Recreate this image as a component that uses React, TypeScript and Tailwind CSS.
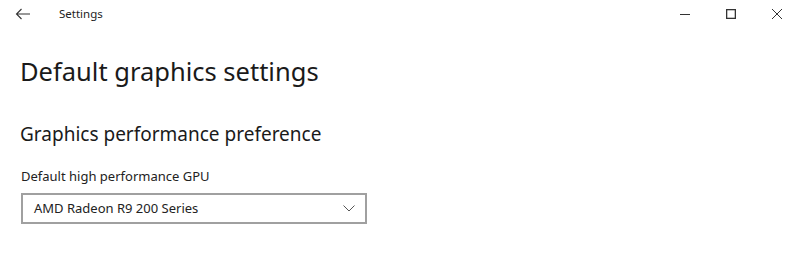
import React from "react";

export default function App() {
  return (
    <div className="w-[800px] h-[259px] bg-white overflow-hidden text-[#1a1a1a]" style={{ fontFamily: '"Noto Sans", "Open Sans", sans-serif' }}>
      <div className="h-[27px] flex items-center">
        <div className="w-[44px] flex justify-center pl-[2px]">
          <svg width="16" height="12" viewBox="0 0 16 12" fill="none" stroke="#333" strokeWidth="1.1">
            <path d="M15 6H1.5M6.5 1L1.5 6l5 5" />
          </svg>
        </div>
        <span className="ml-[15px] text-[11.5px] leading-none text-[#222]">Settings</span>
        <div className="ml-auto flex items-center h-full">
          <div className="w-[46px] flex justify-center">
            <svg width="10" height="10" viewBox="0 0 10 10" stroke="#333" strokeWidth="1">
              <path d="M0 5.5H10" />
            </svg>
          </div>
          <div className="w-[46px] flex justify-center">
            <svg width="10" height="10" viewBox="0 0 10 10" fill="none" stroke="#333" strokeWidth="1.3">
              <rect x="0.65" y="0.65" width="8.7" height="8.7" />
            </svg>
          </div>
          <div className="w-[46px] flex justify-center">
            <svg width="10" height="10" viewBox="0 0 10 10" stroke="#333" strokeWidth="1">
              <path d="M0 0L10 10M10 0L0 10" />
            </svg>
          </div>
        </div>
      </div>
      <div className="pl-[20px]">
        <h1 className="mt-[28px] text-[25.5px] leading-[32px] font-normal">Default graphics settings</h1>
        <h2 className="mt-[35px] text-[19px] leading-[24px] font-normal">Graphics performance preference</h2>
        <div className="mt-[22px] text-[13px] leading-[16px] pl-[1px] text-[#222]">Default high performance GPU</div>
        <div className="mt-[9px] w-[346px] h-[31px] border-2 border-[#a0a0a0] flex items-center pl-[11px] pr-[10px] ml-[1px]">
          <span className="text-[13px] text-[#222]">AMD Radeon R9 200 Series</span>
          <svg className="ml-auto" width="12" height="7" viewBox="0 0 12 7" fill="none" stroke="#555" strokeWidth="1">
            <path d="M0.5 0.5L6 6l5.5-5.5" />
          </svg>
        </div>
      </div>
    </div>
  );
}
